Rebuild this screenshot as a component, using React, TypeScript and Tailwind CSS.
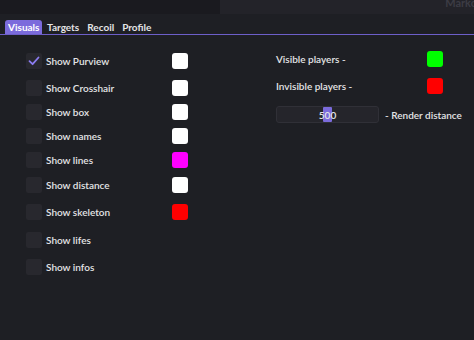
import React from "react";

const rows: { label: string; checked?: boolean; color?: string; h: string }[] = [
  { label: "Show Purview", checked: true, color: "#ffffff", h: "h-[27px]" },
  { label: "Show Crosshair", color: "#ffffff", h: "h-[24px]" },
  { label: "Show box", color: "#ffffff", h: "h-[24px]" },
  { label: "Show names", color: "#ffffff", h: "h-[24px]" },
  { label: "Show lines", color: "#ff00ff", h: "h-[25px]" },
  { label: "Show distance", color: "#ffffff", h: "h-[27px]" },
  { label: "Show skeleton", color: "#ff0000", h: "h-[28px]" },
  { label: "Show lifes", h: "h-[27px]" },
  { label: "Show infos", h: "h-[27px]" },
];

function Check({ checked }: { checked?: boolean }) {
  return (
    <div className="w-[16px] h-[16px] rounded-[2px] bg-[#28282e] flex items-center justify-center shrink-0">
      {checked && (
        <svg width="12" height="12" viewBox="0 0 12 12">
          <path d="M1.5 6.2 L4.6 9.2 L10.5 2.5" fill="none" stroke="#8b7cf0" strokeWidth="1.8" strokeLinecap="round" strokeLinejoin="round" />
        </svg>
      )}
    </div>
  );
}

export default function App() {
  return (
    <div
      className="w-[474px] h-[340px] bg-[#1e1f24] overflow-hidden flex flex-col text-[#e4e4e6]"
      style={{ fontFamily: 'Lato, "Noto Sans", sans-serif' }}
    >
      <div className="h-[14px] flex shrink-0">
        <div className="w-[220px] bg-[#1a1a1f]" />
        <div className="flex-1 bg-[#232329] relative">
          <span className="absolute right-[-3px] top-[-5px] text-[11px] font-bold text-[#3c3c44]">Marko</span>
        </div>
      </div>
      <div className="h-[6px] shrink-0" />
      <div className="flex items-end h-[14px] pl-[5px] gap-[1px] shrink-0 text-[10px] font-bold leading-none">
        <div className="h-[14px] px-[3px] bg-[#7b6bdc] rounded-t-[3px] flex items-center text-white">Visuals</div>
        <div className="h-[14px] px-[3.5px] flex items-center">Targets</div>
        <div className="h-[14px] px-[3.5px] flex items-center">Recoil</div>
        <div className="h-[14px] px-[3.5px] flex items-center">Profile</div>
      </div>
      <div className="h-[1px] bg-[#6d5fc9] shrink-0" />
      <div className="flex pt-[18px] text-[10px] font-semibold leading-none">
        <div className="w-[250px] pl-[26px] flex flex-col">
          {rows.map((r) => (
            <div key={r.label} className={`${r.h} flex items-start`}>
              <Check checked={r.checked} />
              <span className="ml-[4px] h-[16px] flex items-center">{r.label}</span>
              {r.color && (
                <div className="ml-auto mr-[62px] w-[16px] h-[16px] rounded-[3px]" style={{ background: r.color }} />
              )}
            </div>
          ))}
        </div>
        <div className="flex-1 pl-[26px] flex flex-col -mt-[2px]">
          <div className="h-[27px] flex items-start">
            <span className="h-[16px] flex items-center">Visible players -</span>
            <div className="ml-auto mr-[31px] w-[16px] h-[16px] rounded-[3px] bg-[#00ff00]" />
          </div>
          <div className="h-[28px] flex items-start">
            <span className="h-[16px] flex items-center">Invisible players -</span>
            <div className="ml-auto mr-[31px] w-[16px] h-[16px] rounded-[3px] bg-[#ff0000]" />
          </div>
          <div className="flex items-center">
            <div className="relative w-[103px] h-[17px] rounded-[3px] bg-[#25252b] border border-[#303037] flex items-center justify-center">
              <div className="absolute left-[46px] top-[0px] w-[9px] h-[15px] bg-[#7b6bdc] rounded-[1px]" />
              <span className="relative">500</span>
            </div>
            <span className="ml-[6px]">- Render distance</span>
          </div>
        </div>
      </div>
    </div>
  );
}
